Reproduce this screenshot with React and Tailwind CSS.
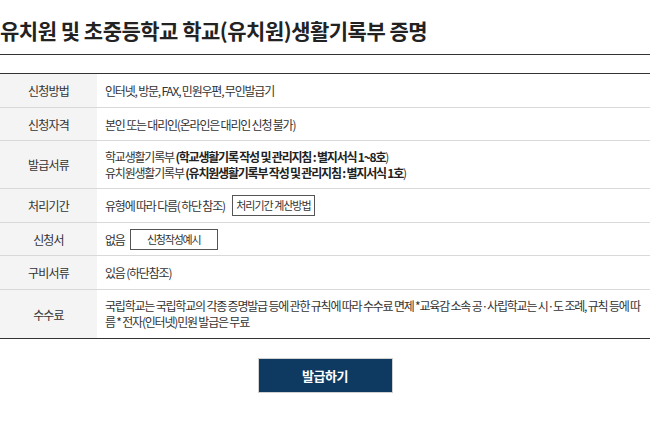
const rows = [
  { label: "신청방법", h: "h-[34px]", body: <span>인터넷, 방문, FAX, 민원우편, 무인발급기</span> },
  { label: "신청자격", h: "h-[33px]", body: <span>본인 또는 대리인(온라인은 대리인 신청 불가)</span> },
  {
    label: "발급서류",
    h: "h-[48px]",
    body: (
      <div className="leading-[16px]">
        <p>
          학교생활기록부 <b className="font-bold text-[#222]">(학교생활기록 작성 및 관리지침 : 별지서식 1~8호</b>)
        </p>
        <p>
          유치원생활기록부 <b className="font-bold text-[#222]">(유치원생활기록부 작성 및 관리지침 : 별지서식 1호</b>)
        </p>
      </div>
    ),
  },
  {
    label: "처리기간",
    h: "h-[34px]",
    body: (
      <div className="flex items-center gap-[7px]">
        <span>유형에 따라 다름( 하단 참조)</span>
        <button className="flex h-[21px] w-[83px] items-center justify-center border border-[#555] bg-white text-[11px] tracking-[-1px]">
          처리기간 계산방법
        </button>
      </div>
    ),
  },
  {
    label: "신청서",
    h: "h-[33px]",
    body: (
      <div className="flex items-center gap-[5px]">
        <span>없음</span>
        <button className="flex h-[21px] w-[88px] items-center justify-center border border-[#555] bg-white text-[11px]">
          신청작성예시
        </button>
      </div>
    ),
  },
  { label: "구비서류", h: "h-[34px]", body: <span>있음 (하단참조)</span> },
  {
    label: "수수료",
    h: "h-[48px]",
    body: (
      <p className="break-all leading-[16px]">
        국립학교는 국립학교의 각종 증명발급 등에 관한 규칙에 따라 수수료 면제 *교육감 소속 공·사립학교는 시·도 조례, 규칙 등에 따름 * 전자(인터넷)민원 발급은 무료
      </p>
    ),
  },
];

export default function App() {
  return (
    <div
      className="min-h-[421px] bg-white text-[#333]"
      style={{ fontFamily: "'Noto Sans CJK KR', 'Noto Sans', sans-serif" }}
    >
      {/* Title */}
      <h1 className="border-b border-[#333] pt-[15px] pb-[9px] text-[21px] font-bold leading-[30px] tracking-[-0.5px] text-[#222]">
        유치원 및 초중등학교 학교(유치원)생활기록부 증명
      </h1>

      {/* Info table */}
      <div className="mt-[18px] border-t border-b border-[#333] text-[12px] leading-[15px] tracking-[-1.2px]">
        {rows.map((r, i) => (
          <div
            key={r.label}
            className={`flex ${r.h} ${i < rows.length - 1 ? "border-b border-[#d9d9d9]" : ""}`}
          >
            <div className="flex w-[97px] shrink-0 items-center justify-center bg-[#f4f4f4] tracking-[-0.8px]">
              {r.label}
            </div>
            <div className="flex flex-1 items-center pl-[8px] pr-[4px]">{r.body}</div>
          </div>
        ))}
      </div>

      {/* Submit */}
      <div className="flex justify-center pt-[19px]">
        <button className="h-[35px] w-[135px] border border-[#d0d0d0] bg-[#0e3a62] text-[13px] font-bold tracking-[-0.5px] text-white">
          발급하기
        </button>
      </div>
    </div>
  );
}
